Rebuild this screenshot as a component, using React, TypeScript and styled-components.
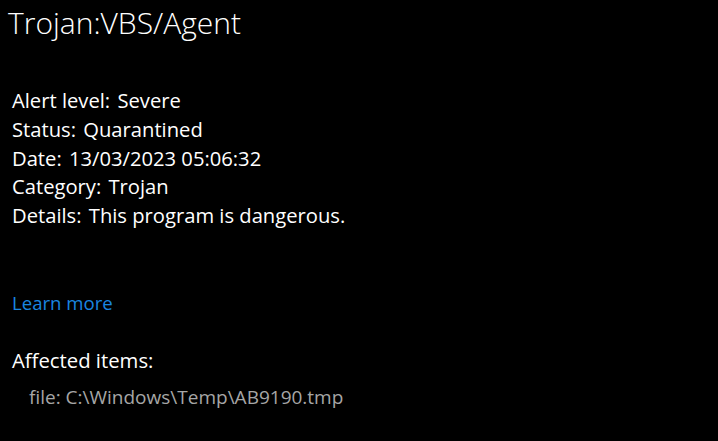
import styled, { createGlobalStyle } from "styled-components";

const GlobalStyle = createGlobalStyle`
  html, body {
    margin: 0;
    padding: 0;
    background: #000;
  }

  body {
    font-family: "Open Sans", "Noto Sans", sans-serif;
    color: #fff;
  }
`;

interface IDetail {
  label: string;
  value: string;
}

const details: IDetail[] = [
  { label: "Alert level:", value: "Severe" },
  { label: "Status:", value: "Quarantined" },
  { label: "Date:", value: "13/03/2023 05:06:32" },
  { label: "Category:", value: "Trojan" },
  { label: "Details:", value: "This program is dangerous." },
];

const App = () => {
  return (
    <>
      <GlobalStyle />
      <ThreatStyle>
        <h1 className="threat-name">Trojan:VBS/Agent</h1>
        <ul className="details">
          {details.map((detail) => (
            <li key={detail.label}>
              <span className="label">{detail.label}</span> {detail.value}
            </li>
          ))}
        </ul>
        <a className="learn-more" href="#">
          Learn more
        </a>
        <h2 className="affected-title">Affected items:</h2>
        <p className="affected-item">file: C:\Windows\Temp\AB9190.tmp</p>
      </ThreatStyle>
    </>
  );
};

const ThreatStyle = styled.div`
  width: 718px;
  height: 441px;
  box-sizing: border-box;
  padding: 3px 0 0 8px;
  display: flex;
  flex-direction: column;
  align-items: flex-start;
  background: #000;

  .threat-name {
    margin: 0;
    font-size: 30px;
    font-weight: 300;
    line-height: 40px;
  }

  .details {
    list-style: none;
    margin: 43px 0 0 4px;
    padding: 0;

    li {
      font-size: 20.2px;
      line-height: 28.8px;
    }

    .label {
      margin-right: 2px;
    }
  }

  .learn-more {
    margin: 59px 0 0 4px;
    font-size: 18.6px;
    line-height: 28px;
    color: #1a86e0;
    text-decoration: none;
  }

  .affected-title {
    margin: 29px 0 0 4px;
    font-size: 20.3px;
    font-weight: 400;
    line-height: 28px;
  }

  .affected-item {
    margin: 10px 0 0 21px;
    font-size: 19px;
    line-height: 26px;
    color: #a6a6a6;
  }
`;

export default App;
